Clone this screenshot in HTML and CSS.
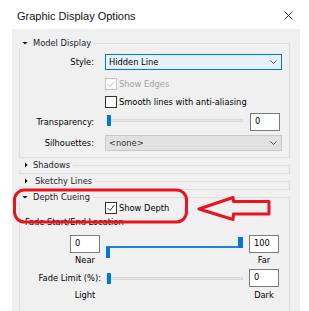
FILE: index.html
```html
<!DOCTYPE html>
<html lang="en">
<head>
    <meta charset="UTF-8">
    <meta name="viewport" content="width=device-width, initial-scale=1.0">
    <title>Graphic Display Options</title>
    <link rel="stylesheet" href="styles.css">
</head>
<body>
    <div class="dialog">
        <header class="titlebar">
            <span class="title">Graphic Display Options</span>
            <svg class="close" viewBox="0 0 9 9"><path d="M0.5 0.5 L8.5 8.5 M8.5 0.5 L0.5 8.5"/></svg>
        </header>

        <div class="panel">
            <!-- model display -->
            <section class="group model">
                <div class="group-head">
                    <svg class="tri" viewBox="0 0 6 6"><polygon points="0.5,2 5.5,2 3,4.6"/></svg>
                    <span>Model Display</span>
                </div>

                <div class="field r1">
                    <label>Style:</label>
                    <div class="select active">
                        <span>Hidden Line</span>
                        <svg class="chev" viewBox="0 0 7 4"><polyline points="0.5,0.5 3.5,3.5 6.5,0.5"/></svg>
                    </div>
                </div>
                <div class="field r2">
                    <span></span>
                    <div class="check disabled">
                        <span class="box"><svg viewBox="0 0 10 10"><polyline points="1.5,5 4,7.5 8.5,2"/></svg></span>
                        Show Edges
                    </div>
                </div>
                <div class="field r3">
                    <span></span>
                    <div class="check">
                        <span class="box"></span>
                        Smooth lines with anti-aliasing
                    </div>
                </div>
                <div class="field r4">
                    <label>Transparency:</label>
                    <div class="control">
                        <div class="slider">
                            <div class="track"></div>
                            <div class="thumb t-mid"></div>
                        </div>
                        <div class="edit">0</div>
                    </div>
                </div>
                <div class="field r5">
                    <label>Silhouettes:</label>
                    <div class="select off">
                        <span>&lt;none&gt;</span>
                        <svg class="chev" viewBox="0 0 7 4"><polyline points="0.5,0.5 3.5,3.5 6.5,0.5"/></svg>
                    </div>
                </div>
            </section>

            <section class="group collapsed">
                <div class="group-head">
                    <svg class="tri" viewBox="0 0 6 6"><polygon points="3,0.5 5.6,3 3,5.5"/></svg>
                    <span>Shadows</span>
                </div>
            </section>

            <section class="group collapsed">
                <div class="group-head">
                    <svg class="tri" viewBox="0 0 6 6"><polygon points="3,0.5 5.6,3 3,5.5"/></svg>
                    <span class="shift">Sketchy Lines</span>
                </div>
            </section>

            <!-- depth cueing -->
            <section class="group depth">
                <div class="group-head">
                    <svg class="tri" viewBox="0 0 6 6"><polygon points="0.5,2 5.5,2 3,4.6"/></svg>
                    <span>Depth Cueing</span>
                </div>

                <div class="field d1">
                    <span></span>
                    <div class="check">
                        <span class="box"><svg viewBox="0 0 10 10"><polyline points="1.5,5 4,7.5 8.5,2"/></svg></span>
                        Show Depth
                    </div>
                </div>
                <div class="caption">Fade Start/End Location</div>

                <div class="drow d3">
                    <div class="edit near-box">0</div>
                    <div class="slider">
                        <div class="range-line"></div>
                        <div class="thumb t-low"></div>
                        <div class="thumb t-high"></div>
                    </div>
                    <div class="edit">100</div>
                </div>
                <div class="drow d4">
                    <span class="under">Near</span>
                    <span></span>
                    <span class="under-r">Far</span>
                </div>
                <div class="drow d5">
                    <label class="fade-label">Fade Limit (%):</label>
                    <div class="slider">
                        <div class="track low"></div>
                        <div class="thumb t-limit"></div>
                    </div>
                    <div class="edit">0</div>
                </div>
                <div class="drow d6">
                    <span class="under">Light</span>
                    <span></span>
                    <span class="under-r">Dark</span>
                </div>
            </section>
        </div>

        <svg class="markup" viewBox="0 0 309 311">
            <rect x="14.5" y="190" width="172" height="32" rx="10"/>
            <polygon points="199,209 233,197.5 233.5,201.5 269,201.5 269,214 233.5,214 233,219.5"/>
        </svg>
    </div>
</body>
</html>
```

FILE: styles.css
```css
body{margin:0; padding:0; font-family:"DejaVu Sans", Verdana, sans-serif; font-size:8.3px; color:#000;}

.dialog{position:relative; width:309px; height:311px; overflow:hidden; background:#fff;}

.titlebar{height:29px; box-sizing:border-box; padding:2px 16px 0 17px; display:flex; align-items:center; justify-content:space-between;}
.title{font-family:"Liberation Sans", Arial, sans-serif; font-size:11px; color:#111;}
.close{width:9px; height:9px; fill:none; stroke:#333; stroke-width:1;}

.panel{margin-left:12px; width:288px; height:282px; box-sizing:border-box; padding-top:14px; background:#f0f0f0; overflow:hidden;}

/* group boxes */
.group{margin-left:7px; width:269px; border:1px solid #dedede;}
.group + .group{margin-top:7px;}
.model{padding-bottom:5px;}
.collapsed{padding-bottom:3px;}
.depth{padding-bottom:30px;}

.group-head{display:flex; align-items:center; width:fit-content; height:10px; margin:-6px 0 0 -1px; padding:0 3px 0 3px; background:#f0f0f0; color:#1c1c2c;}
.tri{width:6px; height:6px; margin-right:5px; fill:#111;}
.shift{margin-left:2px;}

/* label + control rows */
.field{display:grid; grid-template-columns:74px 177px; column-gap:11px; align-items:center; height:18px;}
.field label{justify-self:end;}
.r1{margin-top:5px;}
.r2{margin-top:4px;}
.r3{margin-top:0;}
.r4{margin-top:2px;}
.r5{margin-top:3px;}
.d1{height:12px;}

.select{height:16px; box-sizing:border-box; display:flex; align-items:center; justify-content:space-between; padding:0 4px 0 3px;}
.select.active{border:1px solid #0078d7; background:#e5f1fb;}
.select.off{border:1px solid #c9c9c9; background:#e1e1e1; color:#333;}
.chev{width:7px; height:4px; fill:none; stroke:#555; stroke-width:1;}

.check{display:flex; align-items:center;}
.box{width:12px; height:12px; box-sizing:border-box; border:1px solid #333; background:#fff; margin-right:2px; display:flex;}
.box svg{width:10px; height:10px; fill:none; stroke:#333; stroke-width:1;}
.check.disabled{color:#a2a2a2;}
.check.disabled .box{border-color:#c2c2c2;}
.check.disabled .box svg{stroke:#c2c2c2;}

.control{display:flex; align-items:center; height:18px;}
.control .slider{flex:1; margin-left:2px;}
.control .edit{margin:0 2px 0 7px;}

.edit{width:30px; height:18px; box-sizing:border-box; border:1px solid #7a7a7a; background:#fff; padding:2px 0 0 4px; line-height:10px;}

/* sliders */
.slider{position:relative; height:18px;}
.track{margin-top:6px; height:3px; box-sizing:border-box; background:#e7e7e7; border:1px solid #d9d9d9;}
.track.low{margin-top:8px;}
.range-line{position:absolute; left:0; right:0; top:11px; height:2px; background:#1f85dc;}
.thumb{position:absolute; width:4px; height:11px; background:#0078d7;}
.t-mid{left:0; top:2px;}
.t-low{left:0; top:12px;}
.t-high{right:0; top:2px; width:5px;}
.t-limit{left:1px; top:4px;}

/* depth cueing rows */
.caption{margin:2px 0 0 5px; height:12px; line-height:12px;}
.drow{display:grid; grid-template-columns:82px 137px 30px; column-gap:4px; align-items:center;}
.drow > :last-child{margin-left:2px;}
.d3{margin-top:7px; height:18px;}
.d4{margin-top:1px; height:12px;}
.d5{margin-top:3px; height:18px;}
.d6{margin-top:2px; height:12px;}
.near-box{justify-self:end; margin-right:2px;}
.fade-label{justify-self:end; padding-right:1px;}
.under{justify-self:end; width:30px; margin-right:2px; text-align:center;}
.under-r{width:30px; text-align:center;}

/* red annotation on top */
.markup{position:absolute; top:0; left:0; width:309px; height:311px; pointer-events:none; fill:none; stroke:#e8141e; stroke-width:3; stroke-linejoin:round;}
```
